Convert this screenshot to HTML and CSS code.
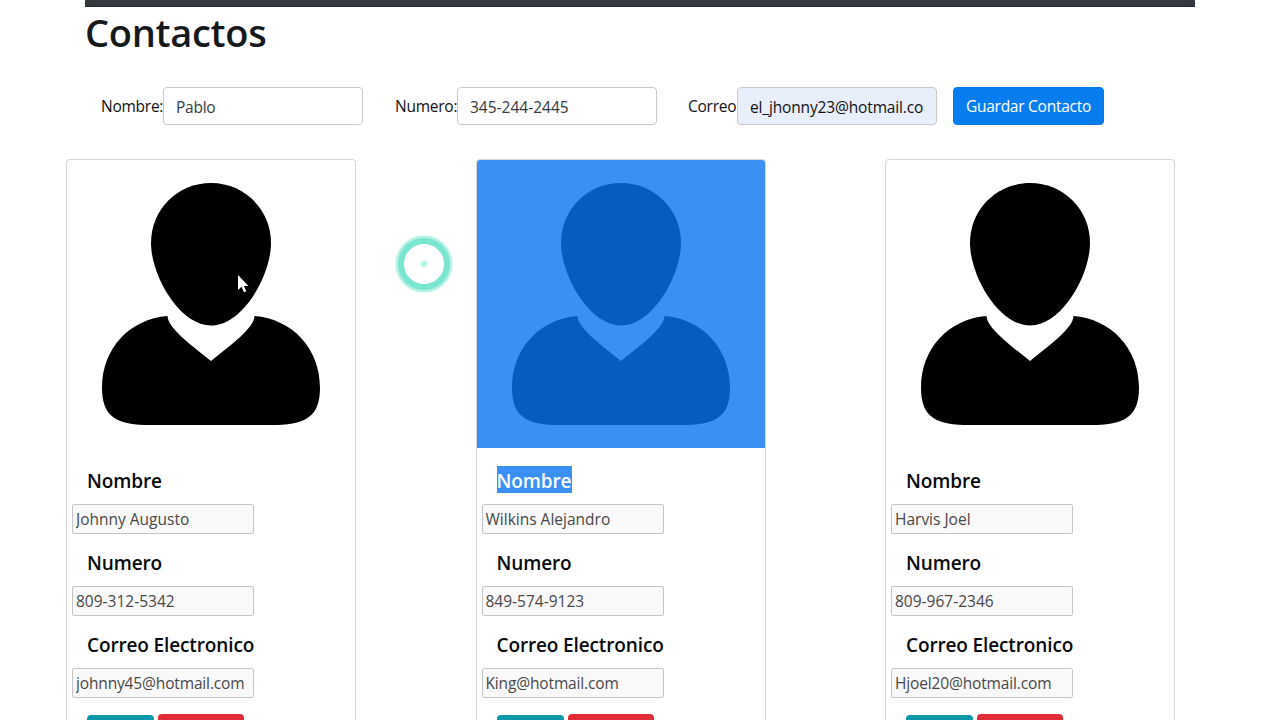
FILE: index.html
```html
<!DOCTYPE html>
<html lang="es">
<head>
<meta charset="utf-8">
<title>Contactos</title>
<link rel="stylesheet" href="styles.css">
</head>
<body>
<svg class="defs" width="0" height="0">
  <symbol id="person" viewBox="0 0 288 288">
    <path d="M144 23C177 23 204 49 204 83C204 115 176 165.500 144 165.500C112 165.500 84 115 84 83C84 49 111 23 144 23Z"/>
    <path d="M100.500 156C101 168 123 184 144 201C165 184 187 168 187.500 156C225 159 253 188 253 228C253 258 237 265 204 265H84C51 265 35 258 35 228C35 188 63 159 100.500 156Z"/>
  </symbol>
</svg>
<div class="container">
  <nav class="navbar"></nav>
  <h1 class="title">Contactos</h1>
  <form class="form">
    <div class="group group-name"><label for="n">Nombre:</label><input class="control" id="n" value="Pablo"></div>
    <div class="group group-number"><label for="t">Numero:</label><input class="control num" id="t" value="345-244-2445"></div>
    <div class="group group-mail"><label for="c">Correo</label><input class="control autofill" id="c" value="el_jhonny23@hotmail.co"></div>
    <button class="save" type="button">Guardar Contacto</button>
  </form>
</div>
<main class="cards">
  <article class="card">
    <svg class="photo"><use href="#person"/></svg>
    <h5>Nombre</h5><input class="field" value="Johnny Augusto" disabled>
    <h5>Numero</h5><input class="field num" value="809-312-5342" disabled>
    <h5>Correo Electronico</h5><input class="field mail" value="johnny45@hotmail.com" disabled>
    <div class="actions"><span class="btn edit"></span><span class="btn remove"></span></div>
  </article>
  <article class="card selected">
    <svg class="photo"><use href="#person"/></svg>
    <h5><span class="mark">Nombre</span></h5><input class="field" value="Wilkins Alejandro" disabled>
    <h5>Numero</h5><input class="field num" value="849-574-9123" disabled>
    <h5>Correo Electronico</h5><input class="field mail" value="King@hotmail.com" disabled>
    <div class="actions"><span class="btn edit"></span><span class="btn remove"></span></div>
  </article>
  <article class="card">
    <svg class="photo"><use href="#person"/></svg>
    <h5>Nombre</h5><input class="field" value="Harvis Joel" disabled>
    <h5>Numero</h5><input class="field num" value="809-967-2346" disabled>
    <h5>Correo Electronico</h5><input class="field mail" value="Hjoel20@hotmail.com" disabled>
    <div class="actions"><span class="btn edit"></span><span class="btn remove"></span></div>
  </article>
</main>
<div class="ripple"></div>
<svg class="cursor" width="14" height="20" viewBox="0 0 14 20"><path d="M1 1V16L4.500 12.800L7 18.300L9.300 17.300L6.900 12H11.500Z" fill="#fff"/></svg>
</body>
</html>
```
FILE: styles.css
```css
* { box-sizing: border-box; }
html, body { height: 720px; overflow: hidden; }
body {
  margin: 0;
  background: #fff;
  color: #212529;
  font: 400 15.500px/24px "Open Sans", "Noto Sans", sans-serif;
  letter-spacing: -0.25px;
}
input, button { font: inherit; letter-spacing: inherit; margin: 0; }
.defs { position: absolute; }
.container { width: 1110px; margin: 0 auto; }
.navbar { height: 7px; background: #343a40; border-bottom: 1px solid #23282c; }
.title {
  margin: 1px 0 0;
  height: 48px;
  font-size: 38px;
  line-height: 48px;
  font-weight: 600;
  letter-spacing: -0.3px;
  color: #16191c;
}
.form { display: flex; height: 38px; margin-top: 31px; padding-left: 16px; color: #111; }
.group { display: flex; align-items: center; }
.group label { height: 24px; white-space: nowrap; }
.group-name label { width: 62px; }
.group-number label { width: 62px; }
.group-mail label { width: 49px; }
.group-number { margin-left: 32px; }
.group-mail { margin-left: 31px; }
.control {
  width: 200px;
  height: 38px;
  padding: 8px 12px 6px;
  border: 1px solid #c6cacf;
  border-radius: 4px;
  background: #fff;
  color: #343a40;
}
.autofill { background: #e8eefa; color: #111; letter-spacing: -0.15px; }
.save {
  width: 151px;
  height: 38px;
  margin-left: 16px;
  padding: 0;
  border: 1px solid #0779e8;
  border-radius: 4px;
  background: #087df0;
  color: #fff;
  white-space: nowrap;
}
.cards { display: grid; grid-template-columns: 290px 290px 290px; column-gap: 119.500px; margin: 34px 0 0 66px; }
.card { height: 561px; overflow: hidden; border: 1px solid #d8d8d8; border-bottom: 0; border-radius: 4px 4px 0 0; background: #fff; }
.photo { display: block; width: 288px; height: 288px; fill: #000; }
.selected .photo { background: #3a91f3; fill: #065dbd; }
.card h5 {
  margin: 21px 0 11px 20px;
  height: 24px;
  font-size: 19px;
  line-height: 24px;
  font-weight: 600;
  letter-spacing: -0.13px;
  color: #080a0c;
}
.card .field + h5 { margin-top: 17px; }
.mark { display: inline-block; width: 75px; height: 27px; margin-top: -3px; padding-top: 3px; background: #3a91f3; color: #fff; }
.field {
  display: block;
  width: 182px;
  height: 30px;
  margin-left: 5px;
  padding: 1px 3px;
  border: 1px solid #c6c6c6;
  border-radius: 2px;
  background: #f9f9f9;
  color: #484848;
  letter-spacing: 0;
}
.num { letter-spacing: 0; }
.mail { letter-spacing: -0.15px; }
.actions { display: flex; align-items: flex-start; gap: 4px; margin: 16px 0 0 20px; }
.btn { height: 6px; border-radius: 4px 4px 0 0; }
.edit { width: 67px; height: 5px; margin-top: 1px; background: #0d97ad; }
.remove { width: 86px; background: #e22d38; }
.ripple {
  position: absolute;
  left: 395px;
  top: 235px;
  width: 58px;
  height: 58px;
  border-radius: 50%;
  background: radial-gradient(circle, #b8f3e5 0 3px, #fff 4px 19.500px, #7be6cf 20.500px 25.500px, #b5f2e4 26.500px 28px, #fff0 29px);
}
.cursor { position: absolute; left: 237px; top: 274px; }
```
